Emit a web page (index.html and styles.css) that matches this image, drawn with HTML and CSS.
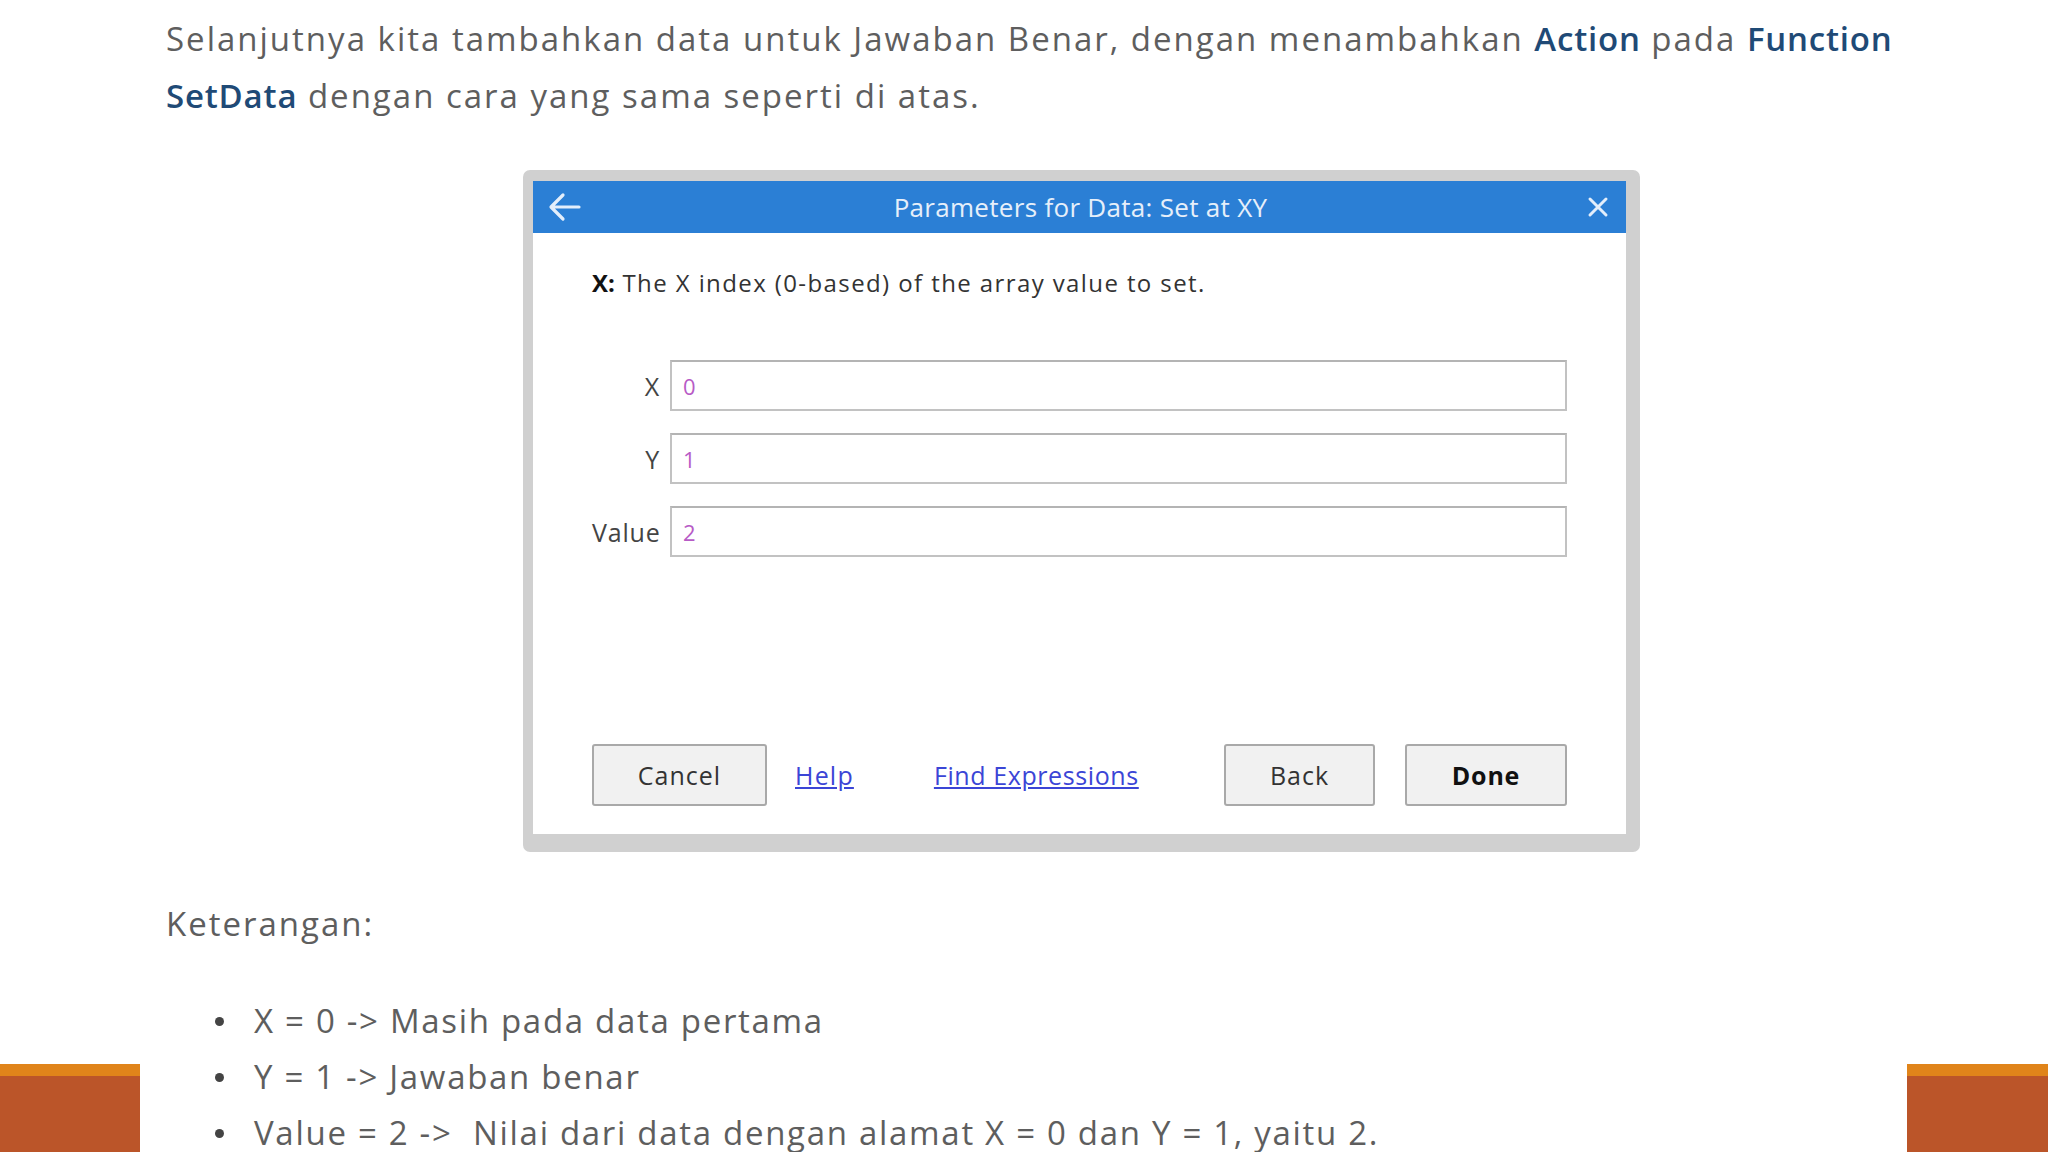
FILE: index.html
```html
<!DOCTYPE html>
<html lang="id">
<head>
<meta charset="utf-8">
<title>Parameters for Data: Set at XY</title>
<link rel="stylesheet" href="styles.css">
</head>
<body>
<main class="page">
  <p class="intro">Selanjutnya kita tambahkan data untuk Jawaban Benar, dengan menambahkan <b>Action</b> pada <b>Function</b><br><b>SetData</b> dengan cara yang sama seperti di atas.</p>

  <div class="dialog">
    <div class="panel">
      <div class="titlebar">
        <svg class="back-icon" viewBox="0 0 34 30" width="34" height="30" aria-hidden="true">
          <path d="M31 15 H4 M15 3 L3 15 L15 27" fill="none" stroke="#e3eefb" stroke-width="3.2" stroke-linecap="round" stroke-linejoin="round"/>
        </svg>
        <div class="title">Parameters for Data: Set at XY</div>
        <svg class="close-icon" viewBox="0 0 22 22" width="22" height="22" aria-hidden="true">
          <path d="M3 3 L19 19 M19 3 L3 19" fill="none" stroke="#e3eefb" stroke-width="3" stroke-linecap="round"/>
        </svg>
      </div>
      <div class="dbody">
        <p class="desc"><b>X:</b> The X index (0-based) of the array value to set.</p>
        <div class="fields">
          <div class="row"><span class="lbl">X</span><div class="input">0</div></div>
          <div class="row"><span class="lbl">Y</span><div class="input">1</div></div>
          <div class="row"><span class="lbl">Value</span><div class="input">2</div></div>
        </div>
        <div class="actions">
          <button class="btn cancel">Cancel</button>
          <a class="link help" href="#">Help</a>
          <a class="link find" href="#">Find Expressions</a>
          <span class="spacer"></span>
          <button class="btn back">Back</button>
          <button class="btn done">Done</button>
        </div>
      </div>
    </div>
  </div>

  <p class="note">Keterangan:</p>
  <ul class="list">
    <li>X = 0 -&gt; Masih pada data pertama</li>
    <li>Y = 1 -&gt; Jawaban benar</li>
    <li>Value = 2 -&gt;&nbsp; Nilai dari data dengan alamat X = 0 dan Y = 1, yaitu 2.</li>
  </ul>
</main>
<div class="corner corner-left"></div>
<div class="corner corner-right"></div>
</body>
</html>
```

FILE: styles.css
```css
* { box-sizing: border-box; }

html, body {
  margin: 0;
  padding: 0;
  background: #ffffff;
  width: 2048px;
  height: 1152px;
  overflow: hidden;
}

body {
  position: relative;
  font-family: "Open Sans", "Liberation Sans", sans-serif;
}

.page {
  padding-left: 166px;
  padding-top: 10px;
}

.intro,
.note {
  margin: 0;
  font-size: 33px;
  line-height: 57px;
  color: #5e5e5e;
  letter-spacing: 2px;
  font-weight: 400;
}

.intro b {
  color: #1f4a76;
  font-weight: 600;
  letter-spacing: 0.8px;
}

/* dialog */
.dialog {
  margin-top: 46px;
  margin-left: 357px;
  width: 1117px;
  height: 682px;
  background: #d0d0d0;
  border-radius: 7px;
  padding: 11px 14px 18px 10px;
}

.panel {
  background: #ffffff;
  height: 100%;
  display: flex;
  flex-direction: column;
}

.titlebar {
  height: 52px;
  background: #2b7fd5;
  display: flex;
  align-items: center;
  padding: 0 17px 0 15px;
}

.back-icon { flex: none; }
.close-icon { flex: none; }

.title {
  flex: 1;
  text-align: center;
  color: #e6effa;
  font-size: 26px;
  letter-spacing: 0.3px;
  padding-right: 8px;
}

.dbody {
  padding: 34px 59px 28px 59px;
  flex: 1;
  display: flex;
  flex-direction: column;
}

.desc {
  margin: 0;
  font-size: 24px;
  line-height: 32px;
  color: #333333;
  letter-spacing: 1.4px;
}

.desc b { color: #111; font-weight: 700; letter-spacing: 0; }

.fields {
  margin-top: 61px;
  display: flex;
  flex-direction: column;
  gap: 22px;
}

.row {
  display: flex;
  align-items: center;
  gap: 10px;
}

.lbl {
  width: 68px;
  text-align: right;
  font-size: 25px;
  color: #444;
  letter-spacing: 0.8px;
}

.input {
  flex: 1;
  height: 51px;
  border: 2px solid #c2c2c2;
  border-top-color: #b4b4b4;
  background: #ffffff;
  font-size: 22px;
  line-height: 49px;
  padding-left: 11px;
  color: #b75bc6;
}

.actions {
  margin-top: auto;
  display: flex;
  align-items: center;
  height: 62px;
}

.btn {
  height: 62px;
  background: #f1f1f1;
  border: 2px solid #a9a9a9;
  border-radius: 3px;
  font-family: "Open Sans", "Liberation Sans", sans-serif;
  font-size: 25px;
  color: #333;
  padding: 0;
  letter-spacing: 1px;
}

.cancel { width: 175px; }
.back { width: 151px; }
.done { width: 162px; margin-left: 30px; font-weight: 700; color: #111; letter-spacing: 0.8px; }

.link {
  font-size: 25px;
  color: #3b45d6;
  text-decoration: underline;
  letter-spacing: 1.2px;
}

.help { margin-left: 28px; }
.find { margin-left: 80px; letter-spacing: 0.6px; }

.spacer { flex: 1; }

/* notes */
.note { margin-top: 43px; }

.list {
  margin: 41px 0 0 0;
  padding: 0;
  list-style: none;
}

.list li {
  display: flex;
  align-items: center;
  font-size: 33px;
  line-height: 56px;
  color: #5e5e5e;
  letter-spacing: 1.7px;
  white-space: nowrap;
}

.list li::before {
  content: "";
  flex: none;
  width: 9px;
  height: 9px;
  border-radius: 50%;
  background: #444;
  margin-left: 49px;
  margin-right: 30px;
}

/* decorative slide corners */
.corner {
  position: absolute;
  bottom: 0;
  height: 88px;
  background: #bb5529;
  border-top: 12px solid #e0841a;
}

.corner-left { left: 0; width: 140px; }
.corner-right { right: 0; width: 141px; }
```
